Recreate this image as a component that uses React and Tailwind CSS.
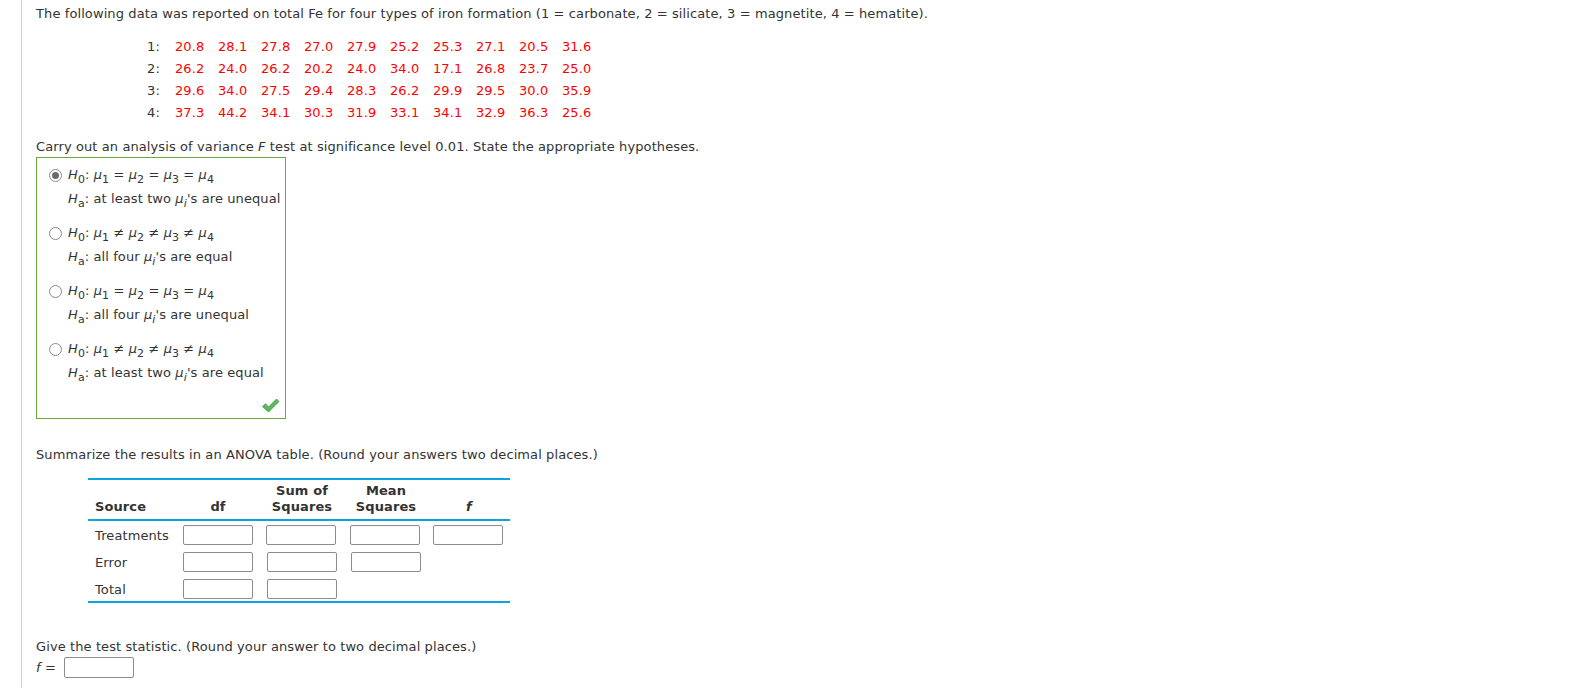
import React from "react";

const F = { fontFamily: '"DejaVu Sans", Verdana, sans-serif' };

const data = [
  ["20.8", "28.1", "27.8", "27.0", "27.9", "25.2", "25.3", "27.1", "20.5", "31.6"],
  ["26.2", "24.0", "26.2", "20.2", "24.0", "34.0", "17.1", "26.8", "23.7", "25.0"],
  ["29.6", "34.0", "27.5", "29.4", "28.3", "26.2", "29.9", "29.5", "30.0", "35.9"],
  ["37.3", "44.2", "34.1", "30.3", "31.9", "33.1", "34.1", "32.9", "36.3", "25.6"],
];

function Sub({ children, italic }) {
  return (
    <span className={`inline-block text-[11px] leading-none relative top-[4px] ${italic ? "italic" : ""}`}>{children}</span>
  );
}

function Mu({ n }) {
  return (
    <span>
      <span className="italic">μ</span>
      <Sub>{n}</Sub>
    </span>
  );
}

function H0({ op }) {
  return (
    <div className="h-[24px] leading-[24px] whitespace-nowrap">
      <span className="italic">H</span>
      <Sub>0</Sub>: <Mu n="1" /> {op} <Mu n="2" /> {op} <Mu n="3" /> {op} <Mu n="4" />
    </div>
  );
}

function Ha({ text, tail }) {
  return (
    <div className="h-[24px] leading-[24px] whitespace-nowrap">
      <span className="italic">H</span>
      <Sub>a</Sub>: {text} <span className="italic">μ</span>
      <Sub italic>i</Sub>'s {tail}
    </div>
  );
}

function Radio({ checked }) {
  return (
    <div className="w-[13px] h-[13px] rounded-full border border-[#8a8a8a] bg-white flex items-center justify-center mt-[6px] shrink-0">
      {checked && <div className="w-[7px] h-[7px] rounded-full bg-[#6b6b6b]" />}
    </div>
  );
}

function Option({ checked, op, text, tail }) {
  return (
    <div className="flex gap-[6px]">
      <Radio checked={checked} />
      <div>
        <H0 op={op} />
        <Ha text={text} tail={tail} />
      </div>
    </div>
  );
}

function Box() {
  return <div className="w-[70px] h-[20px] border border-[#8c8c8c] rounded-[2px] bg-white" />;
}

export default function App() {
  return (
    <div className="min-h-[688px] bg-white text-[13px] text-[#333] tracking-[0.1px]" style={F}>
      <div className="ml-[21px] min-h-[688px] border-l border-[#cfcfcf] pl-[14px] pt-[6px]">
        <div className="leading-[16px]">
          The following data was reported on total Fe for four types of iron formation (1 = carbonate, 2 = silicate, 3 = magnetite, 4 = hematite).
        </div>

        <div className="ml-[111px] mt-[14px]">
          {data.map((row, i) => (
            <div key={i} className="flex h-[22px] items-center">
              <div className="w-[28px]">{i + 1}:</div>
              {row.map((v, j) => (
                <div key={j} className="w-[43px] text-[#ff0000]">{v}</div>
              ))}
            </div>
          ))}
        </div>

        <div className="mt-[15px] leading-[16px]">
          Carry out an analysis of variance <span className="italic">F</span> test at significance level 0.01. State the appropriate hypotheses.
        </div>

        <div className="mt-[2px] w-[250px] h-[262px] border border-[#6aac3a] pl-[12px] pt-[5px] flex flex-col gap-[10px] relative">
          <Option checked op="=" text="at least two" tail="are unequal" />
          <Option op="≠" text="all four" tail="are equal" />
          <Option op="=" text="all four" tail="are unequal" />
          <Option op="≠" text="at least two" tail="are equal" />
          <svg className="absolute right-[5px] bottom-[5px]" width="19" height="15" viewBox="0 0 19 15">
            <path d="M1.5 8.5 L4.5 5.8 L7.5 9 L15.5 1 L18 3.5 L7.5 14 Z" fill="#5cb85c" stroke="#3f9a3f" strokeWidth="0.8" strokeLinejoin="round" />
          </svg>
        </div>

        <div className="mt-[28px] leading-[16px]">
          Summarize the results in an ANOVA table. (Round your answers two decimal places.)
        </div>

        <div className="ml-[52px] mt-[15px] w-[422px] border-t-2 border-b-2 border-[#0aa2df]">
          <div className="flex items-end h-[41px] pb-[4px] border-b-2 border-[#0aa2df] font-bold leading-[16px]">
            <div className="w-[88px] pl-[7px]">Source</div>
            <div className="w-[84px] text-center">df</div>
            <div className="w-[84px] text-center">Sum of<br />Squares</div>
            <div className="w-[84px] text-center">Mean<br />Squares</div>
            <div className="w-[82px] text-center italic">f</div>
          </div>
          <div className="flex flex-col gap-[7px] pt-[4px] pb-[2px]">
            {[
              ["Treatments", 4],
              ["Error", 3],
              ["Total", 2],
            ].map(([label, n]) => (
              <div key={label} className="flex items-center h-[20px]">
                <div className="w-[88px] pl-[7px] relative top-[1px]">{label}</div>
                {Array.from({ length: n }).map((_, k) => (
                  <div key={k} className="w-[84px] pl-[7px]">
                    <Box />
                  </div>
                ))}
              </div>
            ))}
          </div>
        </div>

        <div className="mt-[36px] leading-[16px]">
          Give the test statistic. (Round your answer to two decimal places.)
        </div>
        <div className="flex items-center gap-[8px] mt-[2px]">
          <span><span className="italic">f</span> =</span>
          <div className="w-[70px] h-[21px] border border-[#8c8c8c] rounded-[2px] bg-white" />
        </div>
      </div>
    </div>
  );
}
